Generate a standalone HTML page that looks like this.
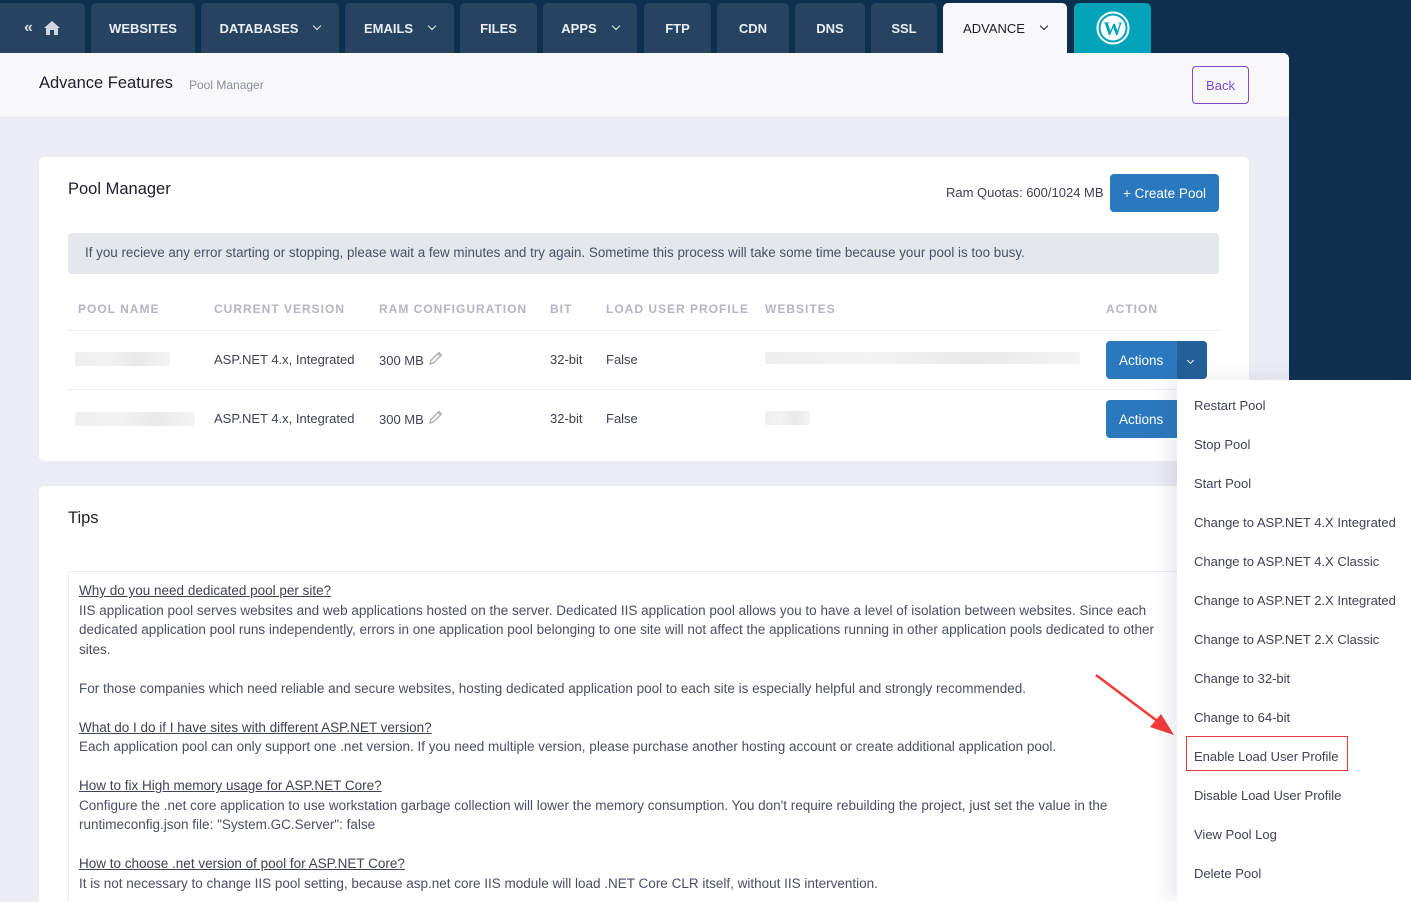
<!DOCTYPE html>
<html><head><meta charset="utf-8"><style>
*{margin:0;padding:0;box-sizing:border-box}
html,body{width:1411px;height:902px;overflow:hidden}
body{background:#0f2f4e;font-family:"Liberation Sans",Arial,sans-serif;position:relative;color:#3f4254}
.a{position:absolute}
.tab{position:absolute;top:3px;height:50px;background:#26445f;border-radius:5px 5px 0 0;color:#e8eef4;font-weight:bold;font-size:13px;display:flex;align-items:center;justify-content:center;gap:10px}
.chev{display:inline-block;width:6px;height:6px;border-right:1.5px solid currentColor;border-bottom:1.5px solid currentColor;transform:rotate(45deg);margin-top:-4px;margin-left:6px}
.t{position:absolute;white-space:nowrap;font-size:13px}
.th{position:absolute;top:302px;font-size:12px;letter-spacing:1px;color:#b5b5c3;font-weight:bold}
.btn{position:absolute;background:#2a78bd;color:#fff;font-size:13.5px;border-radius:4px;display:flex;align-items:center;justify-content:center}
.blur{position:absolute;background:linear-gradient(90deg,#eee,#f3f3f3,#e9e9e9,#f4f4f4);height:14px;border-radius:2px}
.dd div{position:absolute;left:17px;font-size:13px;color:#3f4254;white-space:nowrap}
.tip{position:absolute;left:79px;font-size:13.5px;line-height:19.5px;color:#4a4f63;white-space:nowrap}
.tip u{color:#3f4254}
</style></head><body>
<div class="tab" style="left:0;width:85px;border-radius:0 5px 0 0">
<span style="color:#cfd8e2;font-size:16px">«</span>
<svg width="18" height="16" viewBox="0 0 18 16"><path d="M9 1 L1 8 L3 8 L3 15 L7 15 L7 10 L11 10 L11 15 L15 15 L15 8 L17 8 Z" fill="#cfd8e2"/></svg></div>
<div class="tab" style="left:91px;width:104px">WEBSITES</div>
<div class="tab" style="left:201px;width:138px">DATABASES<span class="chev"></span></div>
<div class="tab" style="left:345px;width:109px">EMAILS<span class="chev"></span></div>
<div class="tab" style="left:460px;width:77px">FILES</div>
<div class="tab" style="left:543px;width:94px">APPS<span class="chev"></span></div>
<div class="tab" style="left:644px;width:67px">FTP</div>
<div class="tab" style="left:717px;width:72px">CDN</div>
<div class="tab" style="left:795px;width:70px">DNS</div>
<div class="tab" style="left:871px;width:66px">SSL</div>
<div class="tab" style="left:943px;width:124px;background:#f8f8fb;color:#1e1e2d;font-weight:normal">ADVANCE<span class="chev"></span></div>
<div class="tab" style="left:1074px;width:77px;background:#00a3b8">
<svg width="34" height="34" viewBox="0 0 34 34"><circle cx="17" cy="17" r="15.5" fill="none" stroke="#fff" stroke-width="2"/><circle cx="17" cy="17" r="12.5" fill="#fff"/><text x="17" y="24" font-family="Liberation Serif,serif" font-weight="bold" font-size="19" fill="#00a3b8" text-anchor="middle">W</text></svg></div>

<div class="a" style="left:0;top:53px;width:1289px;height:849px;background:#ebecf4;border-radius:0 6px 0 0"></div>
<div class="a" style="left:0;top:53px;width:1289px;height:64px;background:#f8f8fb;border-radius:0 6px 0 0"></div>
<div class="t" style="left:39px;top:74px;font-size:16.5px;color:#1e1e2d">Advance Features</div>
<div class="t" style="left:189px;top:78px;font-size:12px;color:#8a8d9c">Pool Manager</div>
<div class="a" style="left:1192px;top:66px;width:57px;height:38px;border:1px solid #7e4bd0;border-radius:4px;color:#7e4bd0;font-size:13px;display:flex;align-items:center;justify-content:center">Back</div>

<div class="a" style="left:39px;top:157px;width:1210px;height:304px;background:#fff;border-radius:5px"></div>
<div class="t" style="left:68px;top:180px;font-size:16.5px;color:#1e1e2d">Pool Manager</div>
<div class="t" style="left:946px;top:185px;color:#3f4254">Ram Quotas: 600/1024 MB</div>
<div class="btn" style="left:1110px;top:174px;width:109px;height:38px">+ Create Pool</div>
<div class="a" style="left:68px;top:233px;width:1151px;height:41px;background:#e4e8ec;border-radius:4px"></div>
<div class="t" style="left:85px;top:245px;color:#4a4f63;font-size:13.4px">If you recieve any error starting or stopping, please wait a few minutes and try again. Sometime this process will take some time because your pool is too busy.</div>
<div class="th" style="left:78px">POOL NAME</div>
<div class="th" style="left:214px">CURRENT VERSION</div>
<div class="th" style="left:379px">RAM CONFIGURATION</div>
<div class="th" style="left:550px">BIT</div>
<div class="th" style="left:606px">LOAD USER PROFILE</div>
<div class="th" style="left:765px">WEBSITES</div>
<div class="th" style="left:1106px">ACTION</div>
<div class="a" style="left:68px;top:330px;width:1151px;height:1px;background:#ebedf3"></div>
<div class="a" style="left:68px;top:389px;width:1151px;height:1px;background:#ebedf3"></div>
<div class="blur" style="left:75px;top:352px;width:95px"></div>
<div class="blur" style="left:75px;top:412px;width:120px"></div>
<div class="blur" style="left:765px;top:352px;width:315px;height:12px"></div>
<div class="blur" style="left:765px;top:411px;width:45px"></div>
<div class="t" style="left:214px;top:352px">ASP.NET 4.x, Integrated</div>
<div class="t" style="left:214px;top:411px">ASP.NET 4.x, Integrated</div>
<div class="t" style="left:379px;top:351px">300 MB <svg width="16" height="16" viewBox="0 0 16 16" style="vertical-align:-2px"><path d="M3 13 L4 9.5 L12 1.5 L14.5 4 L6.5 12 Z M11 2.5 L13.5 5" fill="none" stroke="#aaa" stroke-width="1.2"/></svg></div>
<div class="t" style="left:379px;top:410px">300 MB <svg width="16" height="16" viewBox="0 0 16 16" style="vertical-align:-2px"><path d="M3 13 L4 9.5 L12 1.5 L14.5 4 L6.5 12 Z M11 2.5 L13.5 5" fill="none" stroke="#aaa" stroke-width="1.2"/></svg></div>
<div class="t" style="left:550px;top:352px">32-bit</div>
<div class="t" style="left:550px;top:411px">32-bit</div>
<div class="t" style="left:606px;top:352px">False</div>
<div class="t" style="left:606px;top:411px">False</div>
<div class="btn" style="left:1106px;top:341px;width:101px;height:38px;justify-content:flex-start;padding-left:13px">Actions</div>
<div class="a" style="left:1177px;top:341px;width:30px;height:38px;background:#235f98;border-radius:0 4px 4px 0"><span class="chev" style="position:absolute;left:11px;top:17px;color:#fff;margin:0;width:5px;height:5px"></span></div>
<div class="btn" style="left:1106px;top:400px;width:101px;height:38px;justify-content:flex-start;padding-left:13px">Actions</div>

<div class="a" style="left:39px;top:486px;width:1210px;height:416px;background:#fff;border-radius:5px 5px 0 0"></div>
<div class="t" style="left:68px;top:509px;font-size:16.5px;color:#1e1e2d">Tips</div>
<div class="a" style="left:68px;top:571px;width:1180px;height:331px;border:1px solid #ebedf3;border-right:none;border-bottom:none"></div>
<div class="tip" style="top:581px"><u>Why do you need dedicated pool per site?</u><br>IIS application pool serves websites and web applications hosted on the server. Dedicated IIS application pool allows you to have a level of isolation between websites. Since each<br>dedicated application pool runs independently, errors in one application pool belonging to one site will not affect the applications running in other application pools dedicated to other<br>sites.<br><br>For those companies which need reliable and secure websites, hosting dedicated application pool to each site is especially helpful and strongly recommended.<br><br><u>What do I do if I have sites with different ASP.NET version?</u><br>Each application pool can only support one .net version. If you need multiple version, please purchase another hosting account or create additional application pool.<br><br><u>How to fix High memory usage for ASP.NET Core?</u><br>Configure the .net core application to use workstation garbage collection will lower the memory consumption. You don't require rebuilding the project, just set the value in the<br>runtimeconfig.json file: "System.GC.Server": false<br><br><u>How to choose .net version of pool for ASP.NET Core?</u><br>It is not necessary to change IIS pool setting, because asp.net core IIS module will load .NET Core CLR itself, without IIS intervention.</div>

<svg class="a" style="left:1090px;top:670px" width="90" height="70"><line x1="6" y1="5" x2="74" y2="56" stroke="#f23a3a" stroke-width="2.5"/><polygon points="84,65 60,57 71,44" fill="#f23a3a"/></svg>

<div class="a dd" style="left:1177px;top:380px;width:234px;height:522px;background:#fff;border-radius:4px 0 0 4px;box-shadow:-8px 0 20px rgba(80,80,120,0.12)">
<div style="top:18px">Restart Pool</div>
<div style="top:57px">Stop Pool</div>
<div style="top:96px">Start Pool</div>
<div style="top:135px">Change to ASP.NET 4.X Integrated</div>
<div style="top:174px">Change to ASP.NET 4.X Classic</div>
<div style="top:213px">Change to ASP.NET 2.X Integrated</div>
<div style="top:252px">Change to ASP.NET 2.X Classic</div>
<div style="top:291px">Change to 32-bit</div>
<div style="top:330px">Change to 64-bit</div>
<div style="top:369px">Enable Load User Profile</div>
<div style="top:408px">Disable Load User Profile</div>
<div style="top:447px">View Pool Log</div>
<div style="top:486px">Delete Pool</div>
</div>
<div class="a" style="left:1186px;top:736px;width:162px;height:35px;border:1.5px solid #e53b3b"></div>
</body></html>
